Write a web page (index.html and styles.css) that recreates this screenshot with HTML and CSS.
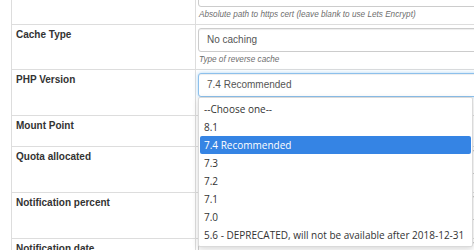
FILE: index.html
```html
<!DOCTYPE html>
<html>
<head>
<meta charset="utf-8">
<link rel="stylesheet" href="styles.css">
</head>
<body>
<div class="form">
  <div class="row r45">
    <div class="label"></div>
    <div class="field">
      <div class="input"></div>
      <div class="help">Absolute path to https cert (leave blank to use Lets Encrypt)</div>
    </div>
  </div>
  <div class="row r45">
    <div class="label">Cache Type</div>
    <div class="field">
      <div class="select">No caching</div>
      <div class="help">Type of reverse cache</div>
    </div>
  </div>
  <div class="row r46">
    <div class="label">PHP Version</div>
    <div class="field">
      <div class="select-wrap">
        <div class="select focus">7.4 Recommended</div>
        <ul class="menu">
          <li>--Choose one--</li>
          <li>8.1</li>
          <li class="active">7.4 Recommended</li>
          <li>7.3</li>
          <li>7.2</li>
          <li>7.1</li>
          <li>7.0</li>
          <li>5.6 - DEPRECATED, will not be available after 2018-12-31</li>
        </ul>
      </div>
    </div>
  </div>
  <div class="row r31">
    <div class="label">Mount Point</div>
    <div class="field"></div>
  </div>
  <div class="row r46">
    <div class="label">Quota allocated</div>
    <div class="field"><div class="input"></div></div>
  </div>
  <div class="row r46">
    <div class="label">Notification percent</div>
    <div class="field"><div class="input"></div></div>
  </div>
  <div class="row r46">
    <div class="label">Notification date</div>
    <div class="field"><div class="input"></div></div>
  </div>
</div>
</body>
</html>
```
FILE: styles.css
```css
html, body {
  margin: 0;
  padding: 0;
  overflow: hidden;
  background: #fff;
}
body {
  font-family: "Liberation Sans", Arial, sans-serif;
  color: #333;
  width: 474px;
  height: 250px;
}
.form {
  margin-top: -21px;
  margin-left: 11px;
  width: 520px;
  border-left: 1px solid #ddd;
}
.row {
  display: grid;
  grid-template-columns: 183px 1fr;
  border-top: 1px solid #ddd;
  box-sizing: border-box;
}
.r45 { height: 45px; }
.r46 { height: 46px; }
.r31 { height: 31px; }
.label {
  padding: 3px 4px 0 4px;
  font-size: 10px;
  line-height: 14px;
  font-weight: bold;
  color: #333;
}
.field {
  border-left: 1px solid #ddd;
  padding: 3px 0 0 2px;
}
.input, .select {
  box-sizing: border-box;
  height: 24px;
  border: 1px solid #ccc;
  border-radius: 3px;
  background: #fff;
  box-shadow: inset 0 1px 1px rgba(0,0,0,0.075);
}
.select {
  padding-left: 8px;
  font-size: 10px;
  line-height: 22px;
  color: #555;
}
.select.focus {
  border-color: #8cc0ec;
  box-shadow: inset 0 1px 1px rgba(0,0,0,0.075), 0 0 4px rgba(102,175,233,0.5);
}
.help {
  margin-top: 1px;
  padding-left: 1px;
  font-size: 8.2px;
  line-height: 14px;
  font-style: italic;
  color: #6e6e6e;
}
.select-wrap {
  position: relative;
}
.menu {
  position: absolute;
  z-index: 10;
  top: 100%;
  left: 0;
  width: 275px;
  box-sizing: border-box;
  margin: 0;
  padding: 2px 1px;
  list-style: none;
  background: #fff;
  border: 1px solid #dadada;
  border-radius: 2px;
  box-shadow: 0 2px 6px rgba(0,0,0,0.16);
  font-family: "Open Sans", "Noto Sans", sans-serif;
  font-size: 10px;
  color: #333;
}
.menu li {
  height: 18px;
  line-height: 18px;
  padding-left: 4px;
  white-space: nowrap;
}
.menu li.active {
  background: #3584e4;
  color: #fff;
  border-radius: 2px;
}
```
